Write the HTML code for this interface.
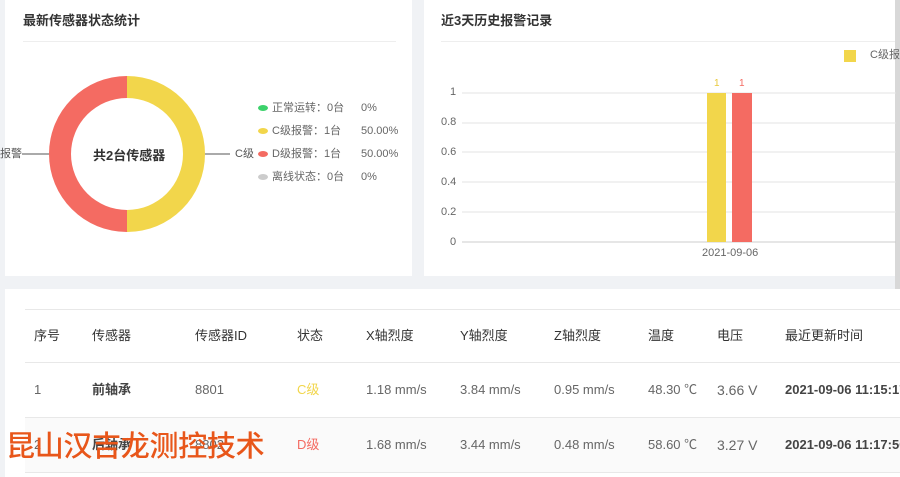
<!DOCTYPE html><html><head><meta charset="utf-8"><style>
body{margin:0;width:900px;height:477px;background:#f0f2f5;font-family:"Liberation Sans","Noto Sans CJK SC",sans-serif;position:relative;overflow:hidden;color:#333}
.card{position:absolute;background:#fff}
.t{position:absolute;font-size:13px;font-weight:bold;color:#333}
.hr{position:absolute;height:1px;background:#eee}
.a{position:absolute;font-size:11px;line-height:14px;color:#666;white-space:nowrap}
table{position:absolute;left:25px;top:309px;border-collapse:collapse;font-size:13px;width:900px}
td{height:54px;padding:0;color:#666;white-space:nowrap;line-height:16px}
tr{border-top:1px solid #e8e8e8}
tr.h td{color:#333;font-size:13px;height:52px}
</style></head><body>
<div class="card" style="left:5px;top:0;width:407px;height:276px"></div>
<div class="card" style="left:424px;top:0;width:471px;height:276px"></div>
<div style="position:absolute;left:895px;top:0;width:5px;height:290px;background:#d8d8d8"></div>
<div class="card" style="left:5px;top:289px;width:895px;height:188px"></div>
<div class="t" style="left:23px;top:10px">最新传感器状态统计</div>
<div class="hr" style="left:23px;top:41px;width:373px"></div>
<div class="t" style="left:441px;top:10px">近3天历史报警记录</div>
<div class="hr" style="left:441px;top:41px;width:454px"></div>
<svg style="position:absolute;left:0;top:0" width="420" height="280">
<path d="M127 76 A78 78 0 0 1 127 232 L127 210 A56 56 0 0 0 127 98Z" fill="#f2d64b"/>
<path d="M127 76 A78 78 0 0 0 127 232 L127 210 A56 56 0 0 1 127 98Z" fill="#f46b62"/>
<line x1="22" y1="154" x2="49" y2="154" stroke="#555"/>
<line x1="205" y1="154" x2="230" y2="154" stroke="#555"/>
<ellipse cx="263" cy="108" rx="5" ry="3" fill="#3cd26b"/>
<ellipse cx="263" cy="131" rx="5" ry="3" fill="#f2d64b"/>
<ellipse cx="263" cy="154" rx="5" ry="3" fill="#f46b62"/>
<ellipse cx="263" cy="177" rx="5" ry="3" fill="#ccc"/>
</svg>
<div class="a" style="left:0;top:147px;color:#555">报警</div>
<div class="a" style="left:235px;top:147px;color:#555">C级</div>
<div style="position:absolute;left:93px;top:145px;font-size:13px;font-weight:bold">共2台传感器</div>
<div class="a" style="left:272px;top:101px">正常运转：0台</div><div class="a" style="left:361px;top:101px">0%</div>
<div class="a" style="left:272px;top:124px">C级报警：1台</div><div class="a" style="left:361px;top:124px">50.00%</div>
<div class="a" style="left:272px;top:147px">D级报警：1台</div><div class="a" style="left:361px;top:147px">50.00%</div>
<div class="a" style="left:272px;top:170px">离线状态：0台</div><div class="a" style="left:361px;top:170px">0%</div>
<svg style="position:absolute;left:420px;top:0" width="476" height="280">
<g stroke="#e3e3e3"><line x1="42" y1="93" x2="476" y2="93"/><line x1="42" y1="123" x2="476" y2="123"/><line x1="42" y1="152" x2="476" y2="152"/><line x1="42" y1="182" x2="476" y2="182"/><line x1="42" y1="212" x2="476" y2="212"/><line x1="42" y1="242" x2="476" y2="242" stroke="#ccc"/></g>
<rect x="287" y="93" width="19" height="149" fill="#f2d64b"/>
<rect x="312" y="93" width="20" height="149" fill="#f46b62"/>
<rect x="424" y="50" width="12" height="12" fill="#f2d64b"/>
</svg>
<div class="a" style="left:450px;top:85px">1</div><div class="a" style="left:441px;top:115px">0.8</div><div class="a" style="left:441px;top:145px">0.6</div><div class="a" style="left:441px;top:175px">0.4</div><div class="a" style="left:441px;top:205px">0.2</div><div class="a" style="left:450px;top:235px">0</div>
<div class="a" style="left:714px;top:77px;color:#e8c93a;font-size:10px">1</div>
<div class="a" style="left:739px;top:77px;color:#f46b62;font-size:10px">1</div>
<div class="a" style="left:702px;top:246px">2021-09-06</div>
<div class="a" style="left:870px;top:48px">C级报</div>
<table>
<tr class="h"><td style="width:58px;padding-left:9px">序号</td><td style="width:103px">传感器</td><td style="width:102px">传感器ID</td><td style="width:69px">状态</td><td style="width:94px">X轴烈度</td><td style="width:94px">Y轴烈度</td><td style="width:94px">Z轴烈度</td><td style="width:69px">温度</td><td style="width:68px">电压</td><td>最近更新时间</td></tr>
<tr><td style="padding-left:9px">1</td><td style="color:#444;font-weight:bold">前轴承</td><td>8801</td><td style="color:#f2d64b">C级</td><td>1.18 mm/s</td><td>3.84 mm/s</td><td>0.95 mm/s</td><td>48.30 ℃</td><td style="font-size:14px">3.66 V</td><td style="color:#444;font-weight:bold">2021-09-06 11:15:17</td></tr>
<tr style="background:#fafafa;border-bottom:1px solid #e8e8e8"><td style="padding-left:9px">2</td><td style="color:#444;font-weight:bold">后轴承</td><td>8802</td><td style="color:#f46b62">D级</td><td>1.68 mm/s</td><td>3.44 mm/s</td><td>0.48 mm/s</td><td>58.60 ℃</td><td style="font-size:14px">3.27 V</td><td style="color:#444;font-weight:bold">2021-09-06 11:17:50</td></tr>
</table>
<div style="position:absolute;left:6px;top:426px;font-size:29px;line-height:36px;color:#e8561a;font-family:'Noto Sans CJK SC',sans-serif;font-weight:500;letter-spacing:-0.3px">昆山汉吉龙测控技术</div>
</body></html>
